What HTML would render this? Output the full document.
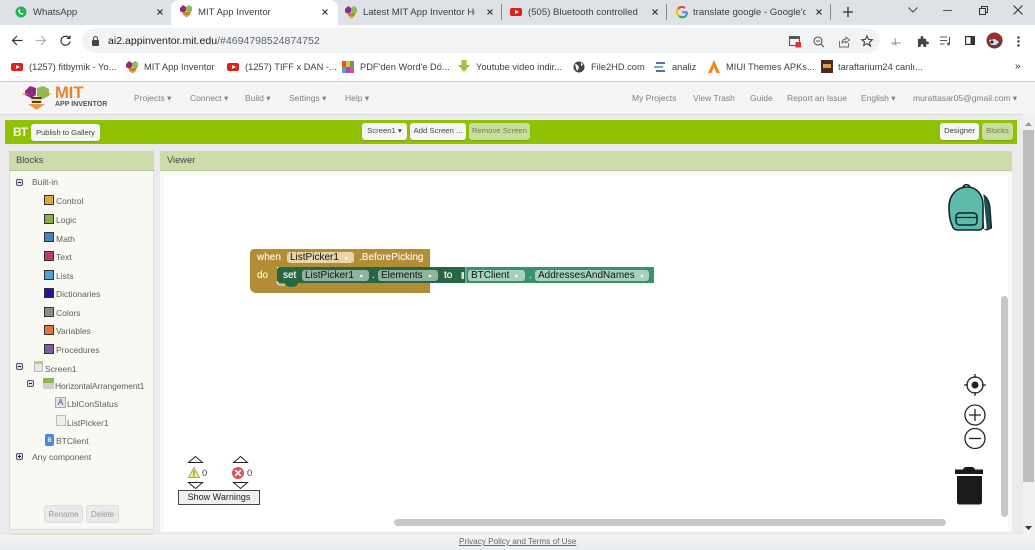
<!DOCTYPE html>
<html><head><meta charset="utf-8"><style>
html,body{margin:0;padding:0}
body{width:1035px;height:550px;overflow:hidden;position:relative;background:#ebebeb;font-family:"Liberation Sans",sans-serif;color:#444}
.a{position:absolute}
.t{position:absolute;white-space:nowrap}
svg{position:absolute;overflow:visible}
.tab{font-size:9.6px;color:#3c4043;top:7px;line-height:11px}
.bm{font-size:9.3px;color:#3c4043;top:62px;line-height:11px}
.nav{font-size:8.5px;color:#808080;top:93px}
.btn{position:absolute;background:#f5f5f5;border-radius:3px;font-size:7.7px;color:#444;text-align:center;box-shadow:0 1px 1px rgba(0,0,0,.15)}
.dis{background:#c9dd9b;color:#6b7d55}
.tr{font-size:8.5px;color:#5e5e5e}
.ic{position:absolute;width:8px;height:8px;border:1px solid #333;left:44px}
.yt{position:absolute;width:12px;height:8px;background:#e0201b;border-radius:2px}
.yt:after{content:"";position:absolute;left:4.5px;top:2px;border-left:4px solid #fff;border-top:2px solid transparent;border-bottom:2px solid transparent}
.fld{position:absolute;height:11px;border-radius:3px;font-size:10px;line-height:11px;color:#111;padding-left:3px;box-sizing:border-box;white-space:nowrap}
.w{position:absolute;color:#fff;font-size:10px;white-space:nowrap;text-shadow:0 0 .4px #fff}
</style></head><body>

<!-- chrome tab strip -->
<div class="a" style="left:0;top:0;width:1035px;height:25px;background:#dee1e6"></div>
<div class="a" style="left:171px;top:0;width:167px;height:26px;background:#fff;border-radius:8px 8px 0 0"></div>

<svg style="left:15px;top:6px" width="12" height="12"><circle cx="6" cy="6" r="5.5" fill="#25b34b"/><path d="M4 3.500c-1 1-.8 2.400.2 3.600s2.400 2 3.600 1.500l.8-1-1.400-.9-.7.5c-.8-.3-1.400-1-1.700-1.800l.6-.6L4.800 3.300z" fill="#fff"/></svg>
<div class="t tab" style="left:33px">WhatsApp</div>
<svg style="left:157px;top:9px" width="6" height="6"><path d="M.5.500l5 5M5.500.500l-5 5" stroke="#333" stroke-width="1.200"/></svg>

<svg style="left:180px;top:5px" width="13" height="13"><path d="M0 3l3-3 3 2v4L3 8 0 6z" fill="#8e2a84"/><path d="M6 2l3-2 3 2v4L9 8 6 6z" fill="#8fbb55"/><path d="M2 7h9l-1.500 3H3.500z" fill="#c9822b"/><path d="M3 10h7l-3.500 2.500z" fill="#e89a3c"/></svg>
<div class="t tab" style="left:198px">MIT App Inventor</div>
<svg style="left:322px;top:9px" width="6" height="6"><path d="M.5.500l5 5M5.500.500l-5 5" stroke="#333" stroke-width="1.200"/></svg>

<svg style="left:345px;top:6px" width="13" height="13"><path d="M0 3l3-3 3 2v4L3 8 0 6z" fill="#8e2a84"/><path d="M6 2l3-2 3 2v4L9 8 6 6z" fill="#8fbb55"/><path d="M2 7h9l-1.500 3H3.500z" fill="#c9822b"/><path d="M3 10h7l-3.500 2.500z" fill="#e89a3c"/></svg>
<div class="t tab" style="left:363px;width:112px;overflow:hidden">Latest MIT App Inventor Hel</div>
<svg style="left:487px;top:9px" width="6" height="6"><path d="M.5.500l5 5M5.500.500l-5 5" stroke="#333" stroke-width="1.200"/></svg>
<div class="a" style="left:501px;top:4px;width:1px;height:16px;background:#888"></div>

<div class="yt" style="left:510px;top:8px"></div>
<div class="t tab" style="left:528px;width:112px;overflow:hidden">(505) Bluetooth controlled R</div>
<svg style="left:652px;top:9px" width="6" height="6"><path d="M.5.500l5 5M5.500.500l-5 5" stroke="#333" stroke-width="1.200"/></svg>
<div class="a" style="left:666px;top:4px;width:1px;height:16px;background:#888"></div>

<svg style="left:676px;top:6px" width="12" height="12" viewBox="0 0 12 12"><path d="M11 6.200H6.200" stroke="#4285f4" stroke-width="2" fill="none"/><path d="M10.200 9.500A5 5 0 0 1 3 10" stroke="#34a853" stroke-width="2" fill="none"/><path d="M3 10A5 5 0 0 1 2 3" stroke="#fbbc05" stroke-width="2" fill="none"/><path d="M2 3a5 5 0 0 1 7-1" stroke="#ea4335" stroke-width="2" fill="none"/><path d="M11 6.200a5 5 0 0 1-.8 3.300" stroke="#4285f4" stroke-width="2" fill="none"/></svg>
<div class="t tab" style="left:693px;width:113px;overflow:hidden">translate google - Google'd</div>
<svg style="left:816px;top:9px" width="6" height="6"><path d="M.5.500l5 5M5.500.500l-5 5" stroke="#333" stroke-width="1.200"/></svg>
<div class="a" style="left:830px;top:4px;width:1px;height:16px;background:#888"></div>
<svg style="left:843px;top:7px" width="10" height="10"><path d="M5 0v10M0 5h10" stroke="#333" stroke-width="1.300"/></svg>

<svg style="left:908px;top:7px" width="10" height="6"><path d="M.5.500L5 5 9.500.500" stroke="#444" fill="none"/></svg>
<div class="a" style="left:943px;top:10px;width:9px;height:1px;background:#555"></div>
<svg style="left:979px;top:6px" width="9" height="9"><path d="M.5 2.500h6v6h-6zM2.500 2.500V.5H8.500v6H6.500" stroke="#333" fill="none"/></svg>
<svg style="left:1013px;top:5px" width="10" height="10"><path d="M.5.500l9 9M9.500.500l-9 9" stroke="#333"/></svg>

<!-- toolbar -->
<div class="a" style="left:0;top:25px;width:1035px;height:28px;background:#fff"></div>
<div class="a" style="left:82px;top:28px;width:798px;height:25px;background:#f1f3f4;border-radius:13px"></div>
<svg style="left:11px;top:35px" width="12" height="11"><path d="M11.500 5.500H1.500M6 1L1.500 5.500 6 10" stroke="#333" stroke-width="1.200" fill="none"/></svg>
<svg style="left:35px;top:35px" width="12" height="11"><path d="M.5 5.500h10M6 1l4.500 4.500L6 10" stroke="#b0b0b0" stroke-width="1.200" fill="none"/></svg>
<svg style="left:60px;top:35px" width="11" height="11"><path d="M9.500 3.500A4.500 4.500 0 1 0 10 6.500" stroke="#333" stroke-width="1.200" fill="none"/><path d="M10.500 0v4h-4z" fill="#333"/></svg>
<svg style="left:91px;top:36px" width="9" height="10"><rect x="1" y="4" width="7" height="6" rx="1" fill="#444"/><path d="M2.500 4V2.500a2 2 0 0 1 4 0V4" stroke="#444" fill="none"/></svg>
<div class="t" style="left:108px;top:35px;font-size:10.55px;color:#202124">ai2.appinventor.mit.edu<span style="color:#5f6368">/#4694798524874752</span></div>
<!-- right icons -->
<svg style="left:789px;top:36px" width="14" height="12"><rect x=".5" y=".5" width="10" height="9" fill="none" stroke="#555"/><rect x=".5" y=".5" width="10" height="2.500" fill="#555"/><rect x="6.500" y="6" width="5.500" height="5.500" fill="#d33"/></svg>
<svg style="left:813px;top:36px" width="12" height="12"><circle cx="5" cy="5" r="4" fill="none" stroke="#555" stroke-width="1.100"/><path d="M8 8l3 3M3 5h4" stroke="#555" stroke-width="1.100"/></svg>
<svg style="left:838px;top:36px" width="12" height="12"><path d="M1.500 5v6h9V7M4 7c0-3 2-4 4-4V1l3.500 3L8 7V5.500C6 5.500 5 6 4 7z" fill="none" stroke="#666" stroke-width=".9"/></svg>
<svg style="left:861px;top:35px" width="12" height="12"><path d="M6 1l1.500 3.400 3.800.4-2.800 2.500.8 3.700L6 8.700 2.700 10.500l.8-3.700L.7 4.800l3.800-.4z" fill="none" stroke="#444" stroke-width="1.100"/></svg>
<svg style="left:891px;top:37px" width="11" height="10"><path d="M0 6h10M4 1l1 8M2 8l3-3" stroke="#889aaa"/></svg>
<svg style="left:917px;top:36px" width="11" height="11" viewBox="0 0 12 12"><path d="M1 3h3V1.500a1.500 1.500 0 0 1 3 0V3h3v3h1.500a1.500 1.500 0 0 1 0 3H10v3H7V10.500a1.500 1.500 0 0 0-3 0V12H1z" fill="#444"/></svg>
<svg style="left:940px;top:36px" width="11" height="10"><path d="M0 1h7M0 4.500h7M0 8h4.500" stroke="#555" stroke-width="1.100"/><path d="M9.500 1v6.500" stroke="#555" stroke-width="1.100"/><circle cx="8.500" cy="8" r="1.400" fill="#555"/></svg>
<svg style="left:965px;top:36px" width="10" height="9"><rect x=".6" y=".6" width="8.800" height="7.800" fill="none" stroke="#333" stroke-width="1.200"/><rect x="5.500" y="1" width="4" height="7" fill="#333"/></svg>
<svg style="left:986px;top:32px" width="17" height="17"><circle cx="8.500" cy="8.500" r="8" fill="#6a3a3a"/><path d="M1 6c3-5 11-6 15-1l-1 3-6-2-4 3z" fill="#a62a2a"/><path d="M3 8l6-1 4 3-3 3-5 0z" fill="#ddd"/><circle cx="6" cy="10" r="1.500" fill="#222"/></svg>
<svg style="left:1017px;top:36px" width="3" height="11"><circle cx="1.500" cy="1.500" r="1.200" fill="#333"/><circle cx="1.500" cy="5.500" r="1.200" fill="#333"/><circle cx="1.500" cy="9.500" r="1.200" fill="#333"/></svg>

<!-- bookmarks -->
<div class="a" style="left:0;top:53px;width:1035px;height:28px;background:#fff"></div>
<div class="a" style="left:0;top:81px;width:1035px;height:1px;background:#ccc"></div>
<div class="yt" style="left:11px;top:63px"></div>
<div class="t bm" style="left:29px">(1257) fitbymik - Yo...</div>
<svg style="left:126px;top:61px" width="12" height="12"><path d="M0 3l3-3 3 2v4L3 8 0 6z" fill="#8e2a84"/><path d="M6 2l3-2 3 2v4L9 8 6 6z" fill="#8fbb55"/><path d="M2 7h9l-1.500 3H3.500z" fill="#c9822b"/><path d="M3 10h7l-3.500 2.500z" fill="#e89a3c"/></svg>
<div class="t bm" style="left:144px">MIT App Inventor</div>
<div class="yt" style="left:227px;top:63px"></div>
<div class="t bm" style="left:245px">(1257) TIFF x DAN -...</div>
<div class="a" style="left:342px;top:61px;width:12px;height:12px;background:linear-gradient(90deg,#e8502a 0 33%,#f0b92a 33% 66%,#4caf50 66%)"><div class="a" style="left:0;top:6px;width:12px;height:6px;background:linear-gradient(90deg,#4aa8d8 0 33%,#a24bd0 33% 66%,#e84a8a 66%)"></div></div>
<div class="t bm" style="left:360px">PDF'den Word'e Dö...</div>
<svg style="left:458px;top:60px" width="12" height="13"><path d="M3.500 0h5v5H12L6 12 0 5h3.500z" fill="#9bc53d"/></svg>
<div class="t bm" style="left:476px">Youtube video indir...</div>
<svg style="left:573px;top:61px" width="12" height="12"><circle cx="6" cy="6" r="5.500" fill="#444"/><path d="M2 3l3 1 1 3-2 3-1-3zM8 1l2 3-2 1z" fill="#fff"/></svg>
<div class="t bm" style="left:591px">File2HD.com</div>
<svg style="left:654px;top:61px" width="12" height="12"><path d="M2 2h9" stroke="#2a3a8a" stroke-width="1.500"/><path d="M0 6h9" stroke="#1ea0a0" stroke-width="1.500"/><path d="M2 10h9" stroke="#2a3a8a" stroke-width="1.500"/></svg>
<div class="t bm" style="left:672px">analiz</div>
<svg style="left:708px;top:60px" width="12" height="13"><path d="M6 0l6 13H8.500L6 7.500 3.500 13H0z" fill="#f08a1d"/></svg>
<div class="t bm" style="left:726px">MIUI Themes APKs...</div>
<div class="a" style="left:821px;top:60px;width:12px;height:13px;background:#4a2a1c"><div class="a" style="left:2px;top:4px;width:8px;height:4px;background:#d8a040"></div></div>
<div class="t bm" style="left:838px">taraftarium24 canlı...</div>
<div class="t" style="left:1015px;top:61px;font-size:10px;color:#333">»</div>

<!-- app inventor header -->
<div class="a" style="left:0;top:82px;width:1035px;height:32px;background:#f5f5f5;border-bottom:1px solid #ddd"></div>
<svg style="left:22px;top:85px" width="30" height="26"><path d="M3 6L8 1l6 2v7l-5 3-6-3z" fill="#8e2a84"/><path d="M15 3l6-2 6 3v7l-6 3-6-3z" fill="#8fbb55"/><path d="M0 9h6M22 9h7" stroke="#e08a2c"/><path d="M9 12h11l-1 6H10z" fill="#5a3a1c"/><path d="M9.500 14h10v2h-10z" fill="#f2d9a0"/><path d="M6 19h17l-8.500 6z" fill="#e89a3c"/></svg>
<div class="t" style="left:55px;top:84px;font-size:16.5px;font-weight:bold;color:#e8842c">MIT</div>
<div class="t" style="left:55px;top:101px;font-size:7px;font-weight:bold;color:#555">APP INVENTOR</div>
<div class="t nav" style="left:134px">Projects ▾</div>
<div class="t nav" style="left:190px">Connect ▾</div>
<div class="t nav" style="left:245px">Build ▾</div>
<div class="t nav" style="left:289px">Settings ▾</div>
<div class="t nav" style="left:345px">Help ▾</div>
<div class="t nav" style="left:632px">My Projects</div>
<div class="t nav" style="left:693px">View Trash</div>
<div class="t nav" style="left:750px">Guide</div>
<div class="t nav" style="left:787px">Report an Issue</div>
<div class="t nav" style="left:861px">English ▾</div>
<div class="t nav" style="left:913px">murattasar05@gmail.com ▾</div>

<!-- green bar -->
<div class="a" style="left:5px;top:120px;width:1012px;height:24px;background:#8fc202"></div>
<div class="t" style="left:13px;top:125px;font-size:12px;font-weight:bold;color:#f2f6e0;letter-spacing:-1px">BT</div>
<div class="btn" style="left:31px;top:124px;width:69px;height:17px;line-height:17px;font-size:7.500px">Publish to Gallery</div>
<div class="btn" style="left:362px;top:123px;width:45px;height:17px;line-height:16px">Screen1 ▾</div>
<div class="btn" style="left:410px;top:123px;width:56px;height:17px;line-height:16px">Add Screen ...</div>
<div class="btn dis" style="left:469px;top:123px;width:61px;height:17px;line-height:16px">Remove Screen</div>
<div class="btn" style="left:940px;top:123px;width:39px;height:17px;line-height:16px">Designer</div>
<div class="btn dis" style="left:982px;top:123px;width:31px;height:17px;line-height:16px">Blocks</div>

<!-- page scrollbar -->
<div class="a" style="left:1023px;top:114px;width:12px;height:421px;background:#f1f1f1"></div>
<div class="a" style="left:1023px;top:130px;width:11px;height:352px;background:#bdbdbd"></div>
<svg style="left:1025px;top:122px" width="7" height="4"><path d="M0 4h7L3.500 0z" fill="#999"/></svg>
<svg style="left:1025px;top:526px" width="7" height="4"><path d="M0 0h7L3.500 4z" fill="#333"/></svg>

<!-- Blocks panel -->
<div class="a" style="left:9px;top:151px;width:145px;height:379px;background:#f9f9f4;border:1px solid #ddd;box-sizing:border-box"></div>
<div class="a" style="left:9px;top:151px;width:145px;height:20px;background:#cddcab;border-bottom:1px solid #b7c79a;box-sizing:border-box"></div>
<div class="t" style="left:16px;top:155px;font-size:9.300px;color:#444">Blocks</div>
<div class="a" style="left:9px;top:533px;width:145px;height:2px;background:#dfe6c9"></div>

<svg style="left:16px;top:179px" width="8" height="8"><rect x=".5" y=".5" width="6" height="6" rx="1.500" fill="#dde" stroke="#556"/><path d="M2 3.500h3" stroke="#224"/></svg>
<div class="t tr" style="left:32px;top:177px">Built-in</div>

<div class="ic" style="top:195px;background:#d9a83f"></div><div class="t tr" style="left:56px;top:196px">Control</div>
<div class="ic" style="top:214px;background:#84b540"></div><div class="t tr" style="left:56px;top:215px">Logic</div>
<div class="ic" style="top:232px;background:#4c7fc0"></div><div class="t tr" style="left:56px;top:234px">Math</div>
<div class="ic" style="top:251px;background:#bd3a6c"></div><div class="t tr" style="left:56px;top:252px">Text</div>
<div class="ic" style="top:270px;background:#49a6d4"></div><div class="t tr" style="left:56px;top:271px">Lists</div>
<div class="ic" style="top:288px;background:#22149a"></div><div class="t tr" style="left:56px;top:289px">Dictionaries</div>
<div class="ic" style="top:307px;background:#8c8c8c"></div><div class="t tr" style="left:56px;top:308px">Colors</div>
<div class="ic" style="top:325px;background:#e0763a"></div><div class="t tr" style="left:56px;top:326px">Variables</div>
<div class="ic" style="top:344px;background:#8a5a9a"></div><div class="t tr" style="left:56px;top:345px">Procedures</div>

<svg style="left:16px;top:363px" width="8" height="8"><rect x=".5" y=".5" width="6" height="6" rx="1.500" fill="#dde" stroke="#556"/><path d="M2 3.500h3" stroke="#224"/></svg>
<div class="a" style="left:34px;top:361px;width:9px;height:11px;background:#e6e6e6;border:1px solid #bbb;border-top:3px solid #b6cc78;box-sizing:border-box;border-radius:1px"></div>
<div class="t tr" style="left:45px;top:364px">Screen1</div>

<svg style="left:27px;top:380px" width="8" height="8"><rect x=".5" y=".5" width="6" height="6" rx="1.500" fill="#dde" stroke="#556"/><path d="M2 3.500h3" stroke="#224"/></svg>
<div class="a" style="left:43px;top:378px;width:11px;height:11px;background:#cfcfcf;border-radius:1px"><div class="a" style="left:0;top:0;width:11px;height:5px;background:#8fb35a"></div></div>
<div class="t tr" style="left:55px;top:381px;letter-spacing:-.13px">HorizontalArrangement1</div>

<div class="a" style="left:55px;top:397px;width:9px;height:9px;background:#dfe4f0;border:1px solid #aab;font-size:8px;line-height:9px;text-align:center;color:#446">A</div>
<div class="t tr" style="left:67px;top:399px">LblConStatus</div>
<div class="a" style="left:56px;top:415px;width:8px;height:9px;background:#eee;border:1px solid #bbb"></div>
<div class="t tr" style="left:67px;top:418px">ListPicker1</div>
<div class="a" style="left:45px;top:434px;width:9px;height:12px;background:#4a8ad4;border-radius:2px;font-size:8px;line-height:12px;text-align:center;color:#fff">ʙ</div>
<div class="t tr" style="left:56px;top:436px">BTClient</div>
<svg style="left:16px;top:453px" width="8" height="8"><rect x=".5" y=".5" width="6" height="6" rx="1.500" fill="#dde" stroke="#556"/><path d="M2 3.500h3M3.500 2v3" stroke="#224"/></svg>
<div class="t tr" style="left:32px;top:452px">Any component</div>

<div class="btn" style="left:44px;top:505px;width:39px;height:18px;line-height:17px;background:#eaeaea;color:#999;border:1px solid #ddd;box-sizing:border-box;box-shadow:none;font-size:8px">Rename</div>
<div class="btn" style="left:86px;top:505px;width:33px;height:18px;line-height:17px;background:#eaeaea;color:#999;border:1px solid #ddd;box-sizing:border-box;box-shadow:none;font-size:8px">Delete</div>

<!-- viewer -->
<div class="a" style="left:160px;top:151px;width:852px;height:20px;background:#cddcab;border-bottom:1px solid #b7c79a;box-sizing:border-box"></div>
<div class="t" style="left:167px;top:155px;font-size:9.300px;color:#444">Viewer</div>
<div class="a" style="left:160px;top:171px;width:852px;height:361px;background:#f9f9f4"></div>
<div class="a" style="left:164px;top:176px;width:844px;height:355px;background:#fff"></div>
<div class="a" style="left:1001px;top:296px;width:7px;height:221px;background:#c8c8c8;border-radius:4px"></div>
<div class="a" style="left:394px;top:519px;width:552px;height:7px;background:#c8c8c8;border-radius:4px"></div>

<!-- backpack -->
<svg style="left:946px;top:183px" width="48" height="50" viewBox="0 0 48 50">
<path d="M36 11c4 2 7 6 8 13l1.500 21-5 2-3-2z" fill="#1f4f4a" stroke="#123" stroke-width="1.200"/>
<path d="M36 10l3.500 36" stroke="#fff" stroke-width="2.500" fill="none"/>
<path d="M17 4c1-3 6-3 7 0" fill="none" stroke="#123" stroke-width="1.600"/>
<path d="M21 4C10 4 3 13 3 24c0 8 1 14 3 18 1 4 3 5 6 5h20c3 0 5-1 5-5V22C37 12 31 4 21 4z" fill="#5dbbaa" stroke="#123" stroke-width="1.600"/>
<rect x="10" y="30" width="21" height="12" rx="3.500" fill="#5dbbaa" stroke="#123" stroke-width="1.500"/>
<path d="M10 34.500h21" stroke="#123" stroke-width="1.300"/>
</svg>

<!-- controls -->
<svg style="left:964px;top:374px" width="22" height="22"><circle cx="11" cy="11" r="8" fill="none" stroke="#222" stroke-width="1.300"/><circle cx="11" cy="11" r="3.500" fill="#222"/><path d="M11 0v4M11 18v4M0 11h4M18 11h4" stroke="#222" stroke-width="1.300"/></svg>
<svg style="left:963px;top:404px" width="24" height="46"><circle cx="12" cy="11" r="10" fill="#fff" stroke="#222" stroke-width="1.300"/><path d="M6 11h12M12 5v12" stroke="#222" stroke-width="1.300"/><circle cx="12" cy="34.500" r="10" fill="#fff" stroke="#222" stroke-width="1.300"/><path d="M6 34.500h12" stroke="#222" stroke-width="1.300"/></svg>
<svg style="left:955px;top:466px" width="29" height="39"><path d="M0 3.500h28v4.500H0z" fill="#1a1a1a"/><path d="M8 4c0-2 2-3 3-3h6c1 0 3 1 3 3z" fill="#1a1a1a"/><path d="M2 10h25v26c0 1.500-1 2.500-2.500 2.500h-20C3 38.500 2 37.500 2 36z" fill="#1a1a1a"/></svg>

<!-- warnings -->
<svg style="left:188px;top:456px" width="15" height="7"><path d="M.5 6.500L7.500.5l7 6z" fill="#fff" stroke="#222"/></svg>
<svg style="left:233px;top:456px" width="15" height="7"><path d="M.5 6.500L7.500.5l7 6z" fill="#fff" stroke="#222"/></svg>
<svg style="left:188px;top:482px" width="15" height="7"><path d="M.5.500L7.500 6.500l7-6z" fill="#fff" stroke="#222"/></svg>
<svg style="left:233px;top:482px" width="15" height="7"><path d="M.5.500L7.500 6.500l7-6z" fill="#fff" stroke="#222"/></svg>
<svg style="left:188px;top:467px" width="12" height="11"><path d="M6 .5l5.500 10H.5z" fill="#f2ef8a" stroke="#a8a850"/><path d="M6 3.500v4M6 8.300v1.200" stroke="#555"/></svg>
<div class="t" style="left:202px;top:468px;font-size:9.500px;color:#444">0</div>
<svg style="left:232px;top:467px" width="12" height="12"><circle cx="6" cy="6" r="6" fill="#d9535a"/><path d="M3.200 3.200l5.600 5.600M8.800 3.200l-5.600 5.600" stroke="#fff" stroke-width="1.600"/></svg>
<div class="t" style="left:247px;top:468px;font-size:9.500px;color:#444">0</div>
<div class="a" style="left:178px;top:490px;width:82px;height:15px;background:#f0f0f0;border:1px solid #444;box-sizing:border-box;font-size:9px;line-height:13px;text-align:center;color:#222">Show Warnings</div>

<!-- blocks -->
<svg style="left:250px;top:248px" width="405" height="46">
<path d="M0 5a4 4 0 0 1 4-4H180V19H27V35H180V45H6a6 6 0 0 1-6-6z" fill="#b18e35"/>
<path d="M27 22a3 3 0 0 1 3-3H215V35H48c-1 3-3 4-6.500 4S36 38 35 35H30a3 3 0 0 1-3-3z" fill="#266643"/>
<path d="M27 33q0 4 4 4H35" stroke="#f5eee0" fill="none"/>
<path d="M215 19H404V35H215z" fill="#39926e"/>
<path d="M211.500 24h2.500v7h-2.500z" fill="#d5e8de"/>
<path d="M215 19h1.500v16H215z" fill="#6fb59b"/>
</svg>
<div class="w" style="left:257px;top:252px;color:#fbf3dd">when</div>
<div class="fld" style="left:287px;top:252px;width:67px;background:#e8d5a9">ListPicker1 <span style="font-size:6px;color:#fff;margin-left:3px">▾</span></div>
<div class="w" style="left:359px;top:252px;color:#fbf3dd">.BeforePicking</div>
<div class="w" style="left:257px;top:270px;color:#fbf3dd">do</div>
<div class="w" style="left:283px;top:270px">set</div>
<div class="fld" style="left:302px;top:270px;width:67px;background:#92b3a1">ListPicker1 <span style="font-size:6px;color:#fff;margin-left:3px">▾</span></div>
<div class="w" style="left:372px;top:270px">.</div>
<div class="fld" style="left:378px;top:270px;width:60px;background:#92b3a1">Elements <span style="font-size:6px;color:#fff;margin-left:3px">▾</span></div>
<div class="w" style="left:444px;top:270px">to</div>
<div class="fld" style="left:468px;top:270px;width:57px;background:#a6d2bd">BTClient <span style="font-size:6px;color:#fff;margin-left:3px">▾</span></div>
<div class="w" style="left:529px;top:270px">.</div>
<div class="fld" style="left:535px;top:270px;width:114px;background:#a6d2bd">AddressesAndNames <span style="font-size:6px;color:#fff;margin-left:3px">▾</span></div>

<!-- footer -->
<div class="a" style="left:0;top:535px;width:1035px;height:15px;background:linear-gradient(#f4f4f4,#e9ecee)"></div>
<div class="t" style="left:459px;top:537px;font-size:8.200px;color:#666;text-decoration:underline">Privacy Policy and Terms of Use</div>

</body></html>
